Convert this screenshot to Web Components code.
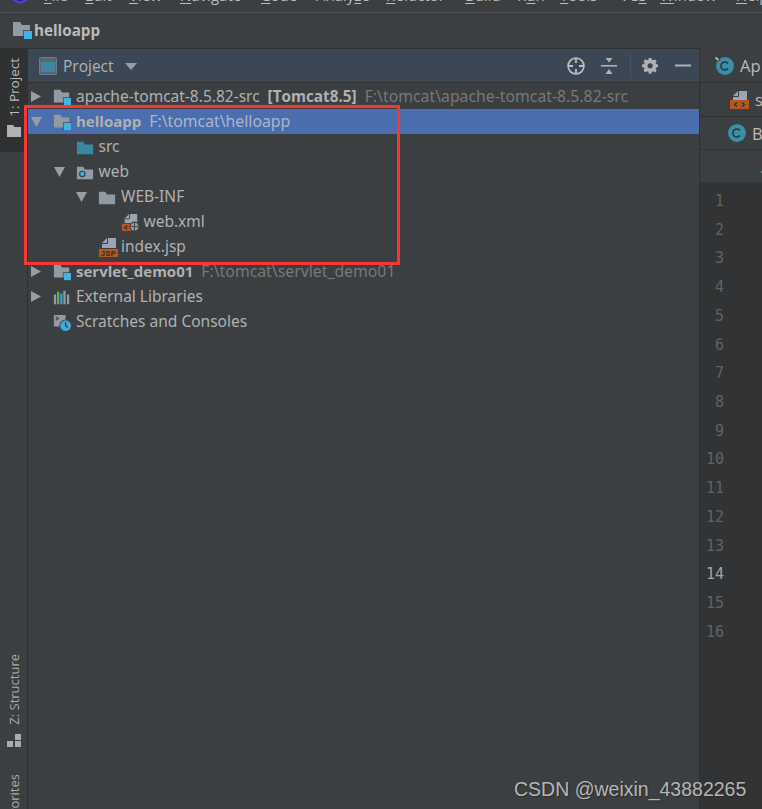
<!DOCTYPE html>
<html>
<head>
<meta charset="utf-8">
<style>
  html, body { margin: 0; height: 100%; background: #3c3f41; overflow: hidden; }
</style>
</head>
<body>
<ide-app>
  <ide-menubar slot="menu"></ide-menubar>
  <ide-navbar slot="nav" label="helloapp"></ide-navbar>
  <ide-strip slot="strip"></ide-strip>
  <ide-project slot="project">
    <ide-row arrow="right" icon="module" label="apache-tomcat-8.5.82-src" tag="[Tomcat8.5]" path="F:\tomcat\apache-tomcat-8.5.82-src"></ide-row>
    <ide-row arrow="down" icon="module" bold="1" selected label="helloapp" path="F:\tomcat\helloapp"></ide-row>
    <ide-row level="1" icon="src" label="src"></ide-row>
    <ide-row level="1" arrow="down" icon="web" label="web"></ide-row>
    <ide-row level="2" arrow="down" icon="folder" label="WEB-INF"></ide-row>
    <ide-row level="3" icon="xml" label="web.xml"></ide-row>
    <ide-row level="2" icon="jsp" label="index.jsp"></ide-row>
    <ide-row arrow="right" icon="module" bold="1" label="servlet_demo01" path="F:\tomcat\servlet_demo01"></ide-row>
    <ide-row arrow="right" icon="libs" label="External Libraries"></ide-row>
    <ide-row icon="scratch" label="Scratches and Consoles"></ide-row>
  </ide-project>
  <ide-editor slot="editor"></ide-editor>
  <ide-callout slot="overlay"></ide-callout>
  <ide-watermark slot="overlay">CSDN @weixin_43882265</ide-watermark>
</ide-app>

<script>
const DOC = `<path d="M8 1h9v10H3V6z" fill="#9aa7b0"/><path d="M8.500 1v5.500H3" fill="none" stroke="#3c3f41"/>`;
const ICONS = {
  module: `<svg width="20" height="19" viewBox="0 0 20 19"><path d="M1 1h7l2 3h8v11H1z" fill="#8f9ca6"/><rect x="12" y="10" width="8" height="8" fill="#3fb4e4"/><path d="M11 9h9v1h-8v8h-1z" fill="#3c3f41" opacity=".7"/></svg>`,
  src: `<svg width="20" height="18" viewBox="0 0 20 18"><path d="M1 2h7l2 3h9v11H1z" fill="#3b87a3"/></svg>`,
  folder: `<svg width="20" height="18" viewBox="0 0 20 18"><path d="M1 2h7l2 3h9v11H1z" fill="#8f9ca6"/></svg>`,
  web: `<svg width="20" height="18" viewBox="0 0 20 18"><path d="M1 2h7l2 3h9v11H1z" fill="#8f9ca6"/><circle cx="7" cy="10" r="3.600" fill="#3c3f41"/><circle cx="7" cy="10" r="2.300" fill="#3fb4e4"/></svg>`,
  xml: `<svg width="20" height="21" viewBox="0 0 20 21"><g transform="translate(1 0)">${DOC}</g><rect x="1" y="12" width="12" height="8" fill="#b5561f"/><path d="M7 14l-3 2 3 2" fill="none" stroke="#2d2d2d" stroke-width="1.300"/><circle cx="15" cy="15" r="5.500" fill="#3c3f41"/><circle cx="15" cy="15" r="4.300" fill="#8f9ca6"/><path d="M11 15h8M15 11v8" stroke="#3c3f41"/></svg>`,
  jsp: `<svg width="20" height="21" viewBox="-2 0 20 21" style="overflow:visible">${DOC}<rect x="0" y="12" width="19" height="8" fill="#b5561f"/><text x="9.500" y="19" text-anchor="middle" font-family="Liberation Sans, sans-serif" font-weight="700" font-size="7.500" letter-spacing=".5" fill="#2d2d2d">JSP</text></svg>`,
  libs: `<svg width="20" height="18" viewBox="0 0 20 18"><rect x="1" y="5" width="2.500" height="11" fill="#8f9ca6"/><rect x="4.500" y="2" width="2.500" height="14" fill="#62b543"/><rect x="8" y="4" width="2.500" height="12" fill="#3b9ed0"/><rect x="11.500" y="1" width="2.500" height="15" fill="#8f9ca6"/><rect x="15.500" y="5" width="2.500" height="11" fill="#8f9ca6"/></svg>`,
  scratch: `<svg width="20" height="20" viewBox="0 0 20 20"><path d="M1 1h13v9h-5v4H1z" fill="#8f9ca6"/><path d="M3 3l3 2-3 2" fill="none" stroke="#3c3f41" stroke-width="1.200"/><circle cx="14" cy="13" r="7" fill="#3c3f41"/><circle cx="14" cy="13" r="6" fill="#3fa9d8"/><path d="M14 9v4l2.500 2" fill="none" stroke="#2b3a42" stroke-width="1.300"/></svg>`
};

class IdeApp extends HTMLElement {
  constructor() {
    super();
    this.attachShadow({ mode: 'open' });
    this.shadowRoot.innerHTML = `
    <style>
      :host { display: block; position: relative; width: 762px; height: 809px; overflow: hidden; background: #3c3f41; }
      .main { display: flex; height: 761px; }
    </style>
    <slot name="menu"></slot>
    <slot name="nav"></slot>
    <div class="main">
      <slot name="strip"></slot>
      <slot name="project"></slot>
      <slot name="editor"></slot>
    </div>
    <slot name="overlay"></slot>`;
  }
}

class IdeMenubar extends HTMLElement {
  constructor() {
    super();
    this.attachShadow({ mode: 'open' });
    const items = [['File',0],['Edit',0],['View',0],['Navigate',0],['Code',0],['Analyze',5],['Refactor',0],['Build',0],['Run',1],['Tools',0],['VCS',2],['Window',0],['Help',0]];
    const html = items.map(([t, u]) => `<span>${t.slice(0,u)}<u>${t[u]}</u>${t.slice(u+1)}</span>`).join('');
    this.shadowRoot.innerHTML = `
    <style>
      :host { display: grid; grid-template-columns: 44px 41px 44px 51px 81px 55px 70px 79px 52px 43px 60px 40px 76px auto; align-items: end; align-content: end; height: 13px; overflow: hidden; box-sizing: border-box; border-bottom: 1px solid #515355;
        font: 15px/20px "Open Sans", sans-serif; color: #bbbbbb; white-space: nowrap; }
      span { margin-bottom: 7px; }
      u { text-underline-offset: 2px; }
      svg { margin: 0 0 8px 10px; }
    </style>
    <svg width="20" height="16" viewBox="0 0 20 16"><path d="M2 1l16 0 0 10-8 4-8-4z" fill="#1c2a6b" stroke="#5c3bd8" stroke-width="2"/><path d="M2 8l3 3" stroke="#d0309a" stroke-width="2"/></svg>
    ${html}`;
  }
}

class IdeNavbar extends HTMLElement {
  constructor() {
    super();
    this.attachShadow({ mode: 'open' });
    this.shadowRoot.innerHTML = `
    <style>
      :host { display: flex; align-items: center; gap: 2px; height: 35px; padding-left: 12px; box-sizing: border-box; color: #bbbbbb;
        font: bold 15.200px "Open Sans", sans-serif; }
      svg { display: block; }
      span { margin-top: -1px; }
    </style>
    ${ICONS.module}<span>${this.getAttribute('label')}</span>`;
  }
}

class IdeStrip extends HTMLElement {
  constructor() {
    super();
    this.attachShadow({ mode: 'open' });
    this.shadowRoot.innerHTML = `
    <style>
      :host { display: flex; flex-direction: column; flex: none; width: 27px; height: 761px; overflow: hidden; border-right: 1px solid #323232;
        box-sizing: content-box; font: 13.500px "Open Sans", sans-serif; color: #bbbbbb; }
      .v { writing-mode: vertical-rl; transform: rotate(180deg); white-space: nowrap; align-self: center; line-height: 16px; }
      .active { background: #2f3133; height: 104px; flex: none; display: flex; flex-direction: column; align-items: center; padding-top: 10px; box-sizing: border-box; }
      .active svg { margin-top: 7px; }
      .bottom { margin-top: auto; display: flex; flex-direction: column; align-items: center; margin-bottom: -34px; color: #a9abad; font-size: 13px; }
      .st { margin: 9px 0 0; display: block; }
      .fav { margin-top: 26px; }
    </style>
    <div class="active">
      <span class="v">1: Project</span>
      <svg width="16" height="14" viewBox="0 0 16 14"><path d="M1 1h6l1.500 2H15v10H1z" fill="#afb1b3"/></svg>
    </div>
    <div class="bottom">
      <span class="v">Z: Structure</span>
      <svg class="st" width="14" height="14" viewBox="0 0 14 14"><rect x="8" y="0" width="6" height="6" fill="#a9abad"/><rect x="0" y="7" width="6" height="6" fill="#a9abad"/><rect x="8" y="7" width="6" height="6" fill="#a9abad"/></svg>
      <span class="v fav">2: Favorites</span>
    </div>`;
  }
}

class IdeProject extends HTMLElement {
  constructor() {
    super();
    this.attachShadow({ mode: 'open' });
    this.shadowRoot.innerHTML = `
    <style>
      :host { display: block; flex: 1; min-width: 0; border-right: 1px solid #323232; font: 15.500px "Noto Sans", sans-serif; }
      .head { display: flex; align-items: center; height: 35px; box-sizing: border-box; background: #3b4754; border-top: 1px solid #323232; border-bottom: 1px solid #323232; color: #afb1b3; padding: 0 8px 0 11px; }
      .title { margin: 1px 0 0 6px; font: 15.500px "Open Sans", sans-serif; }
      .drop { margin: 1px 0 0 11px; }
      .tools { margin-left: auto; display: flex; align-items: center; }
      .tree { padding-top: 1px; }
      svg { display: block; }
      .sep { width: 1px; height: 24px; background: #4a5560; margin: 0 11px 0 13px; }
    </style>
    <div class="head">
      <svg width="18" height="18" viewBox="0 0 18 18"><rect x=".5" y=".5" width="17" height="17" rx="1" fill="#5c6670" stroke="#6f7a82"/><rect x="2" y="5" width="14" height="10" fill="#3b87a3"/></svg>
      <span class="title">Project</span>
      <svg class="drop" width="12" height="7" viewBox="0 0 12 7"><path d="M0 0h12L6 7z" fill="#9a9da0"/></svg>
      <div class="tools">
        <svg width="18" height="18" viewBox="0 0 18 18" fill="none" stroke="#b9bbbd" stroke-width="1.800"><circle cx="9" cy="9" r="7.900"/><path d="M9 1v5M9 12v5M1 9h5M12 9h5"/></svg>
        <svg style="margin-left:16px" width="16" height="16" viewBox="0 0 16 16"><path d="M0 7h16v1.600H0z" fill="#afb1b3"/><path d="M4.500 0h7L8 4.500zM4.500 16h7L8 11z" fill="#afb1b3"/></svg>
        <div class="sep"></div>
        <svg width="16" height="16" viewBox="0 0 16 16"><path fill="#afb1b3" fill-rule="evenodd" d="M6.500 0h3l.4 2.200 1.400.6L13.200 1.500l2.200 2.200-1.300 1.900.6 1.400 2.300.4v3l-2.300.4-.6 1.400 1.300 1.900-2.200 2.200-1.900-1.300-1.400.6-.4 2.200h-3l-.4-2.200-1.400-.6-1.900 1.300L.6 14.100l1.300-1.900-.6-1.400L-1 10.400v-3l2.300-.4.6-1.400L.6 3.700l2.200-2.200 1.900 1.300 1.400-.6zM8 6a2.900 2.900 0 1 0 0 5.800A2.900 2.900 0 0 0 8 6z" transform="scale(.9) translate(1 -0.200)"/></svg>
        <svg style="margin-left:17px" width="16" height="3" viewBox="0 0 16 3"><rect width="16" height="2" y=".5" fill="#afb1b3"/></svg>
      </div>
    </div>
    <div class="tree"><slot></slot></div>`;
  }
}

class IdeRow extends HTMLElement {
  constructor() {
    super();
    this.attachShadow({ mode: 'open' });
  }
  connectedCallback() {
    const level = Number(this.getAttribute('level') || 0);
    const arrow = this.getAttribute('arrow');
    const selected = this.hasAttribute('selected');
    const bold = this.getAttribute('bold') === '1';
    const tag = this.getAttribute('tag');
    const path = this.getAttribute('path');
    const a = arrow === 'down'
      ? '<svg width="11" height="10" viewBox="0 0 11 10"><path d="M0 0h11L5.500 10z" fill="#9a9da0"/></svg>'
      : arrow === 'right'
        ? '<svg width="10" height="11" viewBox="0 0 10 11"><path d="M0 0v11l10-5.500z" fill="#9a9da0"/></svg>'
        : '';
    this.shadowRoot.innerHTML = `
    <style>
      :host { display: flex; align-items: center; height: 25px; color: #afb1b3; white-space: nowrap; ${selected ? 'background:#4b6eaf;' : ''} padding-left: ${level * 22.5}px; box-sizing: border-box; }
      .arrow { width: 25px; flex: none; display: flex; padding-left: 3px; box-sizing: border-box; }
      .icon { width: 18px; flex: none; display: flex; justify-content: center; margin: 2px 5px 0 0; }
      .label, .tag, .path { margin-top: -2px; }
      .label { ${bold ? 'font-family: "Open Sans", sans-serif; font-weight: 700; font-size: 15px;' : ''} }
      .tag { font: 700 15.300px "Open Sans", sans-serif; margin-left: 8px; }
      .path { margin-left: 8px; font-size: 15.800px; color: ${selected ? '#a9b6cf' : '#787878'}; }
    </style>
    <span class="arrow">${a}</span>
    <span class="icon">${ICONS[this.getAttribute('icon')]}</span>
    <span class="label">${this.getAttribute('label')}</span>
    ${tag ? `<span class="tag">${tag}</span>` : ''}
    ${path ? `<span class="path">${path}</span>` : ''}`;
  }
}

class IdeEditor extends HTMLElement {
  constructor() {
    super();
    this.attachShadow({ mode: 'open' });
    const nums = Array.from({ length: 16 }, (_, i) => `<div class="${i === 13 ? 'cur' : ''}">${i + 1}</div>`).join('');
    const c = '<svg width="20" height="20" viewBox="0 0 20 20"><circle cx="10" cy="10" r="9" fill="#3a8ea8"/><path d="M13 7.500a4 4 0 1 0 0 5" fill="none" stroke="#2d3436" stroke-width="1.500"/></svg>';
    const pinned = '<svg width="21" height="21" viewBox="0 0 21 21"><circle cx="11" cy="11" r="9" fill="#3a8ea8"/><path d="M14 8.500a4 4 0 1 0 0 5" fill="none" stroke="#2d3436" stroke-width="1.500"/><circle cx="3.500" cy="3.500" r="2.800" fill="#3c3f41"/><path d="M1.500 2.500l3 2.500" stroke="#aeb4b8" stroke-width="2"/></svg>';
    this.shadowRoot.innerHTML = `
    <style>
      :host { display: flex; flex-direction: column; flex: none; width: 62px; height: 761px; overflow: hidden; font: 16.500px "Open Sans", sans-serif; color: #bbbbbb; }
      .tab { flex: none; display: flex; align-items: center; gap: 5px; border-bottom: 1px solid #323232; box-sizing: border-box; white-space: nowrap; }
      .t1 { height: 35px; padding-left: 14px; }
      .t2 { height: 34px; padding-left: 30px; }
      .t3 { height: 33px; padding-left: 27px; }
      .t4 { height: 33px; padding-left: 60px; }
      svg { flex: none; display: block; }
      .gutter { flex: 1; background: #313335; padding-top: 4px; font: 15px/28.720px "DejaVu Sans Mono", monospace; color: #606366; text-align: right; padding-right: 38px; }
      .cur { color: #a4a3a3; }
    </style>
    <div class="tab t1">${pinned}<span>Ap</span></div>
    <div class="tab t2"><svg width="20" height="20" viewBox="0 0 20 20"><path d="M8 1h9v10H3V6z" fill="#9aa7b0"/><path d="M8.500 1v5.500H3" fill="none" stroke="#3c3f41"/><rect x="0" y="10" width="19" height="9" fill="#b5561f"/><path d="M7 12.500l-2.500 2 2.500 2M12 12.500l2.500 2-2.500 2" fill="none" stroke="#2d2d2d" stroke-width="1.200"/></svg><span>s</span></div>
    <div class="tab t3">${c}<span>Bl</span></div>
    <div class="tab t4"><span>.</span></div>
    <div class="gutter">${nums}</div>`;
  }
}

class IdeCallout extends HTMLElement {
  constructor() {
    super();
    this.attachShadow({ mode: 'open' });
    this.shadowRoot.innerHTML = `
    <style>
      :host { display: block; position: absolute; left: 24px; top: 105px; width: 376px; height: 160px; box-sizing: border-box; border: 3px solid #fb3434; pointer-events: none; }
    </style>`;
  }
}

class IdeWatermark extends HTMLElement {
  constructor() {
    super();
    this.attachShadow({ mode: 'open' });
    this.shadowRoot.innerHTML = `
    <style>
      :host { display: block; position: absolute; left: 514px; top: 778px; font: 19.500px/22px "Liberation Sans", sans-serif; color: #b4b6b7; white-space: nowrap; text-shadow: 1px 1px 1px #2a2a2a; }
    </style>
    <slot></slot>`;
  }
}

customElements.define('ide-app', IdeApp);
customElements.define('ide-menubar', IdeMenubar);
customElements.define('ide-navbar', IdeNavbar);
customElements.define('ide-strip', IdeStrip);
customElements.define('ide-project', IdeProject);
customElements.define('ide-row', IdeRow);
customElements.define('ide-editor', IdeEditor);
customElements.define('ide-callout', IdeCallout);
customElements.define('ide-watermark', IdeWatermark);
</script>
</body>
</html>
